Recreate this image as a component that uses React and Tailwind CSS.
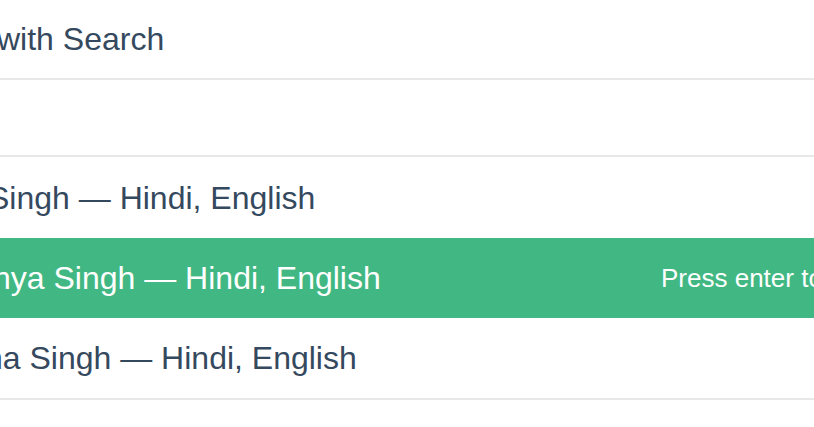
export default function App() {
  const font = { fontFamily: '"Liberation Sans", Arial, sans-serif' };
  return (
    <div className="w-[814px] h-[427px] overflow-hidden bg-white text-[#35495e]" style={font}>
      <div className="h-[78px] flex items-center whitespace-nowrap">
        <span className="ml-[-3px] text-[32px] leading-[32px]">with Search</span>
      </div>
      <div className="h-[2px] bg-[#e8e8e8]" />
      <div className="h-[75px]" />
      <div className="h-[2px] bg-[#e8e8e8]" />
      <div className="h-[81px] flex items-center whitespace-nowrap">
        <span className="ml-[-12px] text-[32px] leading-[32px]">Singh — Hindi, English</span>
      </div>
      <div className="h-[80px] flex items-center justify-between whitespace-nowrap bg-[#41b883] text-white">
        <span className="ml-[-7px] text-[32px] leading-[32px]">nya Singh — Hindi, English</span>
        <span className="mr-[-100px] ml-auto text-[26px] leading-[26px] w-[253px]">Press enter to select</span>
      </div>
      <div className="h-[80px] flex items-center whitespace-nowrap">
        <span className="ml-[-15px] text-[32px] leading-[32px]">na Singh — Hindi, English</span>
      </div>
      <div className="h-[2px] bg-[#e8e8e8]" />
    </div>
  );
}
